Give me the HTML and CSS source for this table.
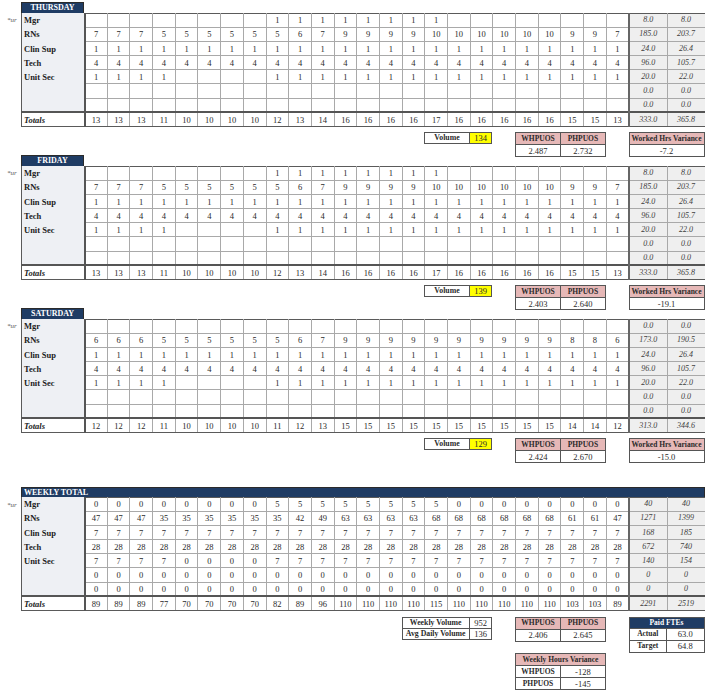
FILE: index.html
```html
<!DOCTYPE html>
<html>
<head>
<meta charset="utf-8">
<title>Staffing Grid</title>
<link rel="stylesheet" href="styles.css">
</head>
<body>
<div class="page">

<section class="sec">
  <div class="gutter"><span class="note">*ur</span></div>
  <div class="main">
    <div class="head">THURSDAY</div>
    <table class="grid">
      <colgroup><col class="cl"><col class="cd" span="24"><col class="cs" span="2"></colgroup>
      <tr><td class="lbl">Mgr</td><td></td><td></td><td></td><td></td><td></td><td></td><td></td><td></td><td>1</td><td>1</td><td>1</td><td>1</td><td>1</td><td>1</td><td>1</td><td>1</td><td></td><td></td><td></td><td></td><td></td><td></td><td></td><td></td><td class="s1">8.0</td><td class="s2">8.0</td></tr>
      <tr><td class="lbl">RNs</td><td>7</td><td>7</td><td>7</td><td>5</td><td>5</td><td>5</td><td>5</td><td>5</td><td>5</td><td>6</td><td>7</td><td>9</td><td>9</td><td>9</td><td>9</td><td>10</td><td>10</td><td>10</td><td>10</td><td>10</td><td>10</td><td>9</td><td>9</td><td>7</td><td class="s1">185.0</td><td class="s2">203.7</td></tr>
      <tr><td class="lbl">Clin Sup</td><td>1</td><td>1</td><td>1</td><td>1</td><td>1</td><td>1</td><td>1</td><td>1</td><td>1</td><td>1</td><td>1</td><td>1</td><td>1</td><td>1</td><td>1</td><td>1</td><td>1</td><td>1</td><td>1</td><td>1</td><td>1</td><td>1</td><td>1</td><td>1</td><td class="s1">24.0</td><td class="s2">26.4</td></tr>
      <tr><td class="lbl">Tech</td><td>4</td><td>4</td><td>4</td><td>4</td><td>4</td><td>4</td><td>4</td><td>4</td><td>4</td><td>4</td><td>4</td><td>4</td><td>4</td><td>4</td><td>4</td><td>4</td><td>4</td><td>4</td><td>4</td><td>4</td><td>4</td><td>4</td><td>4</td><td>4</td><td class="s1">96.0</td><td class="s2">105.7</td></tr>
      <tr><td class="lbl">Unit Sec</td><td>1</td><td>1</td><td>1</td><td>1</td><td></td><td></td><td></td><td></td><td>1</td><td>1</td><td>1</td><td>1</td><td>1</td><td>1</td><td>1</td><td>1</td><td>1</td><td>1</td><td>1</td><td>1</td><td>1</td><td>1</td><td>1</td><td>1</td><td class="s1">20.0</td><td class="s2">22.0</td></tr>
      <tr><td class="lbl"></td><td></td><td></td><td></td><td></td><td></td><td></td><td></td><td></td><td></td><td></td><td></td><td></td><td></td><td></td><td></td><td></td><td></td><td></td><td></td><td></td><td></td><td></td><td></td><td></td><td class="s1">0.0</td><td class="s2">0.0</td></tr>
      <tr><td class="lbl"></td><td></td><td></td><td></td><td></td><td></td><td></td><td></td><td></td><td></td><td></td><td></td><td></td><td></td><td></td><td></td><td></td><td></td><td></td><td></td><td></td><td></td><td></td><td></td><td></td><td class="s1">0.0</td><td class="s2">0.0</td></tr>
      <tr class="tot"><td class="lbl">Totals</td><td>13</td><td>13</td><td>13</td><td>11</td><td>10</td><td>10</td><td>10</td><td>10</td><td>12</td><td>13</td><td>14</td><td>16</td><td>16</td><td>16</td><td>16</td><td>17</td><td>16</td><td>16</td><td>16</td><td>16</td><td>16</td><td>15</td><td>15</td><td>13</td><td class="s1">333.0</td><td class="s2">365.8</td></tr>
    </table>
    <div class="boxes">
      <table class="box vol"><tr><td class="vl">Volume</td><td class="vv">134</td></tr></table>
      <table class="box puos"><tr><th>WHPUOS</th><th>PHPUOS</th></tr><tr><td>2.487</td><td>2.732</td></tr></table>
      <table class="box var"><tr><th>Worked Hrs Variance</th></tr><tr><td>-7.2</td></tr></table>
    </div>
  </div>
</section>

<section class="sec">
  <div class="gutter"><span class="note">*ur</span></div>
  <div class="main">
    <div class="head">FRIDAY</div>
    <table class="grid">
      <colgroup><col class="cl"><col class="cd" span="24"><col class="cs" span="2"></colgroup>
      <tr><td class="lbl">Mgr</td><td></td><td></td><td></td><td></td><td></td><td></td><td></td><td></td><td>1</td><td>1</td><td>1</td><td>1</td><td>1</td><td>1</td><td>1</td><td>1</td><td></td><td></td><td></td><td></td><td></td><td></td><td></td><td></td><td class="s1">8.0</td><td class="s2">8.0</td></tr>
      <tr><td class="lbl">RNs</td><td>7</td><td>7</td><td>7</td><td>5</td><td>5</td><td>5</td><td>5</td><td>5</td><td>5</td><td>6</td><td>7</td><td>9</td><td>9</td><td>9</td><td>9</td><td>10</td><td>10</td><td>10</td><td>10</td><td>10</td><td>10</td><td>9</td><td>9</td><td>7</td><td class="s1">185.0</td><td class="s2">203.7</td></tr>
      <tr><td class="lbl">Clin Sup</td><td>1</td><td>1</td><td>1</td><td>1</td><td>1</td><td>1</td><td>1</td><td>1</td><td>1</td><td>1</td><td>1</td><td>1</td><td>1</td><td>1</td><td>1</td><td>1</td><td>1</td><td>1</td><td>1</td><td>1</td><td>1</td><td>1</td><td>1</td><td>1</td><td class="s1">24.0</td><td class="s2">26.4</td></tr>
      <tr><td class="lbl">Tech</td><td>4</td><td>4</td><td>4</td><td>4</td><td>4</td><td>4</td><td>4</td><td>4</td><td>4</td><td>4</td><td>4</td><td>4</td><td>4</td><td>4</td><td>4</td><td>4</td><td>4</td><td>4</td><td>4</td><td>4</td><td>4</td><td>4</td><td>4</td><td>4</td><td class="s1">96.0</td><td class="s2">105.7</td></tr>
      <tr><td class="lbl">Unit Sec</td><td>1</td><td>1</td><td>1</td><td>1</td><td></td><td></td><td></td><td></td><td>1</td><td>1</td><td>1</td><td>1</td><td>1</td><td>1</td><td>1</td><td>1</td><td>1</td><td>1</td><td>1</td><td>1</td><td>1</td><td>1</td><td>1</td><td>1</td><td class="s1">20.0</td><td class="s2">22.0</td></tr>
      <tr><td class="lbl"></td><td></td><td></td><td></td><td></td><td></td><td></td><td></td><td></td><td></td><td></td><td></td><td></td><td></td><td></td><td></td><td></td><td></td><td></td><td></td><td></td><td></td><td></td><td></td><td></td><td class="s1">0.0</td><td class="s2">0.0</td></tr>
      <tr><td class="lbl"></td><td></td><td></td><td></td><td></td><td></td><td></td><td></td><td></td><td></td><td></td><td></td><td></td><td></td><td></td><td></td><td></td><td></td><td></td><td></td><td></td><td></td><td></td><td></td><td></td><td class="s1">0.0</td><td class="s2">0.0</td></tr>
      <tr class="tot"><td class="lbl">Totals</td><td>13</td><td>13</td><td>13</td><td>11</td><td>10</td><td>10</td><td>10</td><td>10</td><td>12</td><td>13</td><td>14</td><td>16</td><td>16</td><td>16</td><td>16</td><td>17</td><td>16</td><td>16</td><td>16</td><td>16</td><td>16</td><td>15</td><td>15</td><td>13</td><td class="s1">333.0</td><td class="s2">365.8</td></tr>
    </table>
    <div class="boxes">
      <table class="box vol"><tr><td class="vl">Volume</td><td class="vv">139</td></tr></table>
      <table class="box puos"><tr><th>WHPUOS</th><th>PHPUOS</th></tr><tr><td>2.403</td><td>2.640</td></tr></table>
      <table class="box var"><tr><th>Worked Hrs Variance</th></tr><tr><td>-19.1</td></tr></table>
    </div>
  </div>
</section>

<section class="sec">
  <div class="gutter"><span class="note">*ur</span></div>
  <div class="main">
    <div class="head">SATURDAY</div>
    <table class="grid">
      <colgroup><col class="cl"><col class="cd" span="24"><col class="cs" span="2"></colgroup>
      <tr><td class="lbl">Mgr</td><td></td><td></td><td></td><td></td><td></td><td></td><td></td><td></td><td></td><td></td><td></td><td></td><td></td><td></td><td></td><td></td><td></td><td></td><td></td><td></td><td></td><td></td><td></td><td></td><td class="s1">0.0</td><td class="s2">0.0</td></tr>
      <tr><td class="lbl">RNs</td><td>6</td><td>6</td><td>6</td><td>5</td><td>5</td><td>5</td><td>5</td><td>5</td><td>5</td><td>6</td><td>7</td><td>9</td><td>9</td><td>9</td><td>9</td><td>9</td><td>9</td><td>9</td><td>9</td><td>9</td><td>9</td><td>8</td><td>8</td><td>6</td><td class="s1">173.0</td><td class="s2">190.5</td></tr>
      <tr><td class="lbl">Clin Sup</td><td>1</td><td>1</td><td>1</td><td>1</td><td>1</td><td>1</td><td>1</td><td>1</td><td>1</td><td>1</td><td>1</td><td>1</td><td>1</td><td>1</td><td>1</td><td>1</td><td>1</td><td>1</td><td>1</td><td>1</td><td>1</td><td>1</td><td>1</td><td>1</td><td class="s1">24.0</td><td class="s2">26.4</td></tr>
      <tr><td class="lbl">Tech</td><td>4</td><td>4</td><td>4</td><td>4</td><td>4</td><td>4</td><td>4</td><td>4</td><td>4</td><td>4</td><td>4</td><td>4</td><td>4</td><td>4</td><td>4</td><td>4</td><td>4</td><td>4</td><td>4</td><td>4</td><td>4</td><td>4</td><td>4</td><td>4</td><td class="s1">96.0</td><td class="s2">105.7</td></tr>
      <tr><td class="lbl">Unit Sec</td><td>1</td><td>1</td><td>1</td><td>1</td><td></td><td></td><td></td><td></td><td>1</td><td>1</td><td>1</td><td>1</td><td>1</td><td>1</td><td>1</td><td>1</td><td>1</td><td>1</td><td>1</td><td>1</td><td>1</td><td>1</td><td>1</td><td>1</td><td class="s1">20.0</td><td class="s2">22.0</td></tr>
      <tr><td class="lbl"></td><td></td><td></td><td></td><td></td><td></td><td></td><td></td><td></td><td></td><td></td><td></td><td></td><td></td><td></td><td></td><td></td><td></td><td></td><td></td><td></td><td></td><td></td><td></td><td></td><td class="s1">0.0</td><td class="s2">0.0</td></tr>
      <tr><td class="lbl"></td><td></td><td></td><td></td><td></td><td></td><td></td><td></td><td></td><td></td><td></td><td></td><td></td><td></td><td></td><td></td><td></td><td></td><td></td><td></td><td></td><td></td><td></td><td></td><td></td><td class="s1">0.0</td><td class="s2">0.0</td></tr>
      <tr class="tot"><td class="lbl">Totals</td><td>12</td><td>12</td><td>12</td><td>11</td><td>10</td><td>10</td><td>10</td><td>10</td><td>11</td><td>12</td><td>13</td><td>15</td><td>15</td><td>15</td><td>15</td><td>15</td><td>15</td><td>15</td><td>15</td><td>15</td><td>15</td><td>14</td><td>14</td><td>12</td><td class="s1">313.0</td><td class="s2">344.6</td></tr>
    </table>
    <div class="boxes">
      <table class="box vol"><tr><td class="vl">Volume</td><td class="vv">129</td></tr></table>
      <table class="box puos"><tr><th>WHPUOS</th><th>PHPUOS</th></tr><tr><td>2.424</td><td>2.670</td></tr></table>
      <table class="box var"><tr><th>Worked Hrs Variance</th></tr><tr><td>-15.0</td></tr></table>
    </div>
  </div>
</section>

<section class="sec wk">
  <div class="gutter"><span class="note">*ur</span></div>
  <div class="main">
    <div class="head wide">WEEKLY TOTAL</div>
    <table class="grid">
      <colgroup><col class="cl"><col class="cd" span="24"><col class="cs" span="2"></colgroup>
      <tr><td class="lbl">Mgr</td><td>0</td><td>0</td><td>0</td><td>0</td><td>0</td><td>0</td><td>0</td><td>0</td><td>5</td><td>5</td><td>5</td><td>5</td><td>5</td><td>5</td><td>5</td><td>5</td><td>0</td><td>0</td><td>0</td><td>0</td><td>0</td><td>0</td><td>0</td><td>0</td><td class="s1">40</td><td class="s2">40</td></tr>
      <tr><td class="lbl">RNs</td><td>47</td><td>47</td><td>47</td><td>35</td><td>35</td><td>35</td><td>35</td><td>35</td><td>35</td><td>42</td><td>49</td><td>63</td><td>63</td><td>63</td><td>63</td><td>68</td><td>68</td><td>68</td><td>68</td><td>68</td><td>68</td><td>61</td><td>61</td><td>47</td><td class="s1">1271</td><td class="s2">1399</td></tr>
      <tr><td class="lbl">Clin Sup</td><td>7</td><td>7</td><td>7</td><td>7</td><td>7</td><td>7</td><td>7</td><td>7</td><td>7</td><td>7</td><td>7</td><td>7</td><td>7</td><td>7</td><td>7</td><td>7</td><td>7</td><td>7</td><td>7</td><td>7</td><td>7</td><td>7</td><td>7</td><td>7</td><td class="s1">168</td><td class="s2">185</td></tr>
      <tr><td class="lbl">Tech</td><td>28</td><td>28</td><td>28</td><td>28</td><td>28</td><td>28</td><td>28</td><td>28</td><td>28</td><td>28</td><td>28</td><td>28</td><td>28</td><td>28</td><td>28</td><td>28</td><td>28</td><td>28</td><td>28</td><td>28</td><td>28</td><td>28</td><td>28</td><td>28</td><td class="s1">672</td><td class="s2">740</td></tr>
      <tr><td class="lbl">Unit Sec</td><td>7</td><td>7</td><td>7</td><td>7</td><td>0</td><td>0</td><td>0</td><td>0</td><td>7</td><td>7</td><td>7</td><td>7</td><td>7</td><td>7</td><td>7</td><td>7</td><td>7</td><td>7</td><td>7</td><td>7</td><td>7</td><td>7</td><td>7</td><td>7</td><td class="s1">140</td><td class="s2">154</td></tr>
      <tr><td class="lbl"></td><td>0</td><td>0</td><td>0</td><td>0</td><td>0</td><td>0</td><td>0</td><td>0</td><td>0</td><td>0</td><td>0</td><td>0</td><td>0</td><td>0</td><td>0</td><td>0</td><td>0</td><td>0</td><td>0</td><td>0</td><td>0</td><td>0</td><td>0</td><td>0</td><td class="s1">0</td><td class="s2">0</td></tr>
      <tr><td class="lbl"></td><td>0</td><td>0</td><td>0</td><td>0</td><td>0</td><td>0</td><td>0</td><td>0</td><td>0</td><td>0</td><td>0</td><td>0</td><td>0</td><td>0</td><td>0</td><td>0</td><td>0</td><td>0</td><td>0</td><td>0</td><td>0</td><td>0</td><td>0</td><td>0</td><td class="s1">0</td><td class="s2">0</td></tr>
      <tr class="tot"><td class="lbl">Totals</td><td>89</td><td>89</td><td>89</td><td>77</td><td>70</td><td>70</td><td>70</td><td>70</td><td>82</td><td>89</td><td>96</td><td>110</td><td>110</td><td>110</td><td>110</td><td>115</td><td>110</td><td>110</td><td>110</td><td>110</td><td>110</td><td>103</td><td>103</td><td>89</td><td class="s1">2291</td><td class="s2">2519</td></tr>
    </table>
    <div class="boxes wkboxes">
      <table class="box wvol">
        <tr><td class="vl">Weekly Volume</td><td class="vn">952</td></tr>
        <tr><td class="vl">Avg Daily Volume</td><td class="vn">136</td></tr>
      </table>
      <div class="stack">
        <table class="box"><tr><th>WHPUOS</th><th>PHPUOS</th></tr><tr><td>2.406</td><td>2.645</td></tr></table>
        <table class="box hv">
          <tr><th colspan="2">Weekly Hours Variance</th></tr>
          <tr><td class="hl">WHPUOS</td><td>-128</td></tr>
          <tr><td class="hl">PHPUOS</td><td>-145</td></tr>
        </table>
      </div>
      <table class="box fte">
        <tr><th colspan="2">Paid FTEs</th></tr>
        <tr><td class="hl">Actual</td><td>63.0</td></tr>
        <tr><td class="hl">Target</td><td>64.8</td></tr>
      </table>
    </div>
  </div>
</section>

</div>
</body>
</html>
```

FILE: styles.css
```css
* { box-sizing: border-box; }

body {
  margin: 0;
  background: #ffffff;
  font-family: "Liberation Serif", "Times New Roman", serif;
  color: #2a2a2a;
}

.page {
  width: 705px;
  padding-top: 2px;
}

.sec {
  display: flex;
  height: 153px;
}

.sec.wk {
  height: auto;
  margin-top: 25.7px;
}

.gutter {
  width: 21px;
  flex: none;
}

.note {
  display: block;
  margin-top: 13px;
  padding-left: 7px;
  font-size: 7px;
  font-style: italic;
  line-height: 10px;
  color: #555555;
}

.main {
  width: 684px;
  flex: none;
}

.head {
  width: 63px;
  height: 10.7px;
  background: #1f3c64;
  color: #ffffff;
  font-weight: bold;
  font-size: 8px;
  line-height: 10px;
  text-align: center;
  border: 1px solid #2b2b2b;
  border-bottom: none;
}

.head.wide {
  width: 684px;
  height: 10px;
  text-align: left;
  padding-left: 2px;
}

.grid {
  border-collapse: collapse;
  table-layout: fixed;
  width: 684px;
}

.cl { width: 63px; }
.cd { width: 22.7px; }
.cs { width: 38px; }

.grid tr { height: 14.16px; }

.grid td {
  padding: 0;
  border: 1px solid #a9a9a9;
  text-align: center;
  font-size: 8.5px;
  line-height: 10px;
  color: #2a2a2a;
  white-space: nowrap;
  overflow: hidden;
}

.grid tr:first-child td { border-top-color: #5a5a5a; }
.grid td:last-child { border-right-color: #5a5a5a; }

.grid td.lbl {
  background: #eef0f4;
  border-top: none;
  border-bottom: none;
  border-left: 1px solid #5a5a5a;
  border-right: 2px solid #555555;
  text-align: left;
  padding-left: 2px;
  font-weight: bold;
  font-size: 8.5px;
  color: #1c1c1c;
}

.grid tr.tot td {
  border-top: 2px solid #555555;
  border-bottom: 1px solid #5a5a5a;
}

.grid tr.tot td.lbl {
  background: #ffffff;
  font-style: italic;
  border-top: 2px solid #555555;
  border-bottom: 1px solid #5a5a5a;
}

.grid td.s1,
.grid td.s2 {
  background: #efefef;
  font-style: italic;
  font-size: 8px;
  color: #404040;
}

.grid td.s1 { border-left: 2px solid #666666; }

/* summary boxes */
.boxes {
  display: grid;
  grid-template-columns: 63px repeat(24, 22.7px) 38px 38px;
  margin-top: 5.5px;
  align-items: start;
}

.wkboxes { margin-top: 6px; }

.box {
  border-collapse: collapse;
  table-layout: fixed;
  width: 100%;
}

.box th,
.box td {
  border: 1px solid #555555;
  padding: 0;
  text-align: center;
  white-space: nowrap;
  overflow: hidden;
  height: 12px;
  line-height: 10px;
  color: #2a2a2a;
}

.box th {
  background: #e6b8b7;
  font-size: 7.5px;
  font-weight: bold;
}

.box td {
  font-size: 8.5px;
  background: #ffffff;
}

.vol { grid-column: 17 / 20; }
.puos { grid-column: 21 / 25; }
.var { grid-column: 26 / 28; }

.vol td { height: 11px; }
.vol td.vl { font-weight: bold; font-size: 7.8px; }
.vol td.vv { width: 22.7px; background: #ffff00; }

.wvol { grid-column: 16 / 20; }
.wvol td { height: 11.2px; }
.wvol td.vl { font-weight: bold; font-size: 7.8px; }
.wvol td.vn { width: 22.7px; }

.stack {
  grid-column: 21 / 25;
  display: flex;
  flex-direction: column;
  gap: 11.5px;
}

.hv td.hl { width: 45.4px; font-weight: bold; font-size: 7.5px; }

.fte { grid-column: 26 / 28; }
.fte th { background: #1f3c64; color: #ffffff; height: 11px; }
.fte td { height: 11.8px; }
.fte td.hl { width: 39px; font-weight: bold; font-size: 7.5px; }
```
